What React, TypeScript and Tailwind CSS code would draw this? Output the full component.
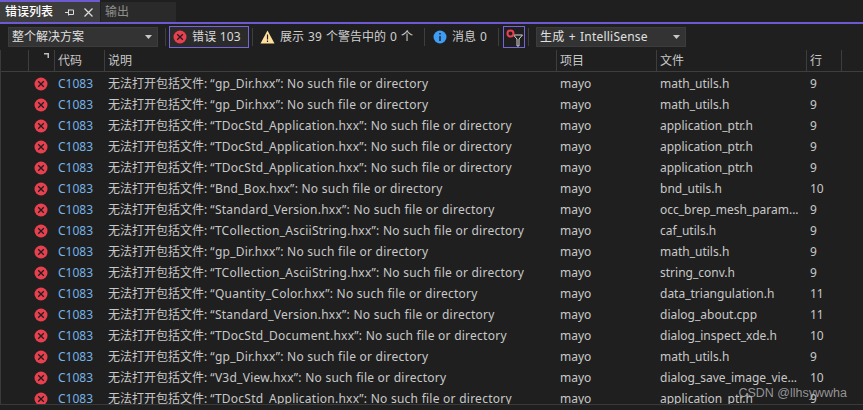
const rows = [
  ['gp_Dir.hxx', 'math_utils.h', '9'],
  ['gp_Dir.hxx', 'math_utils.h', '9'],
  ['TDocStd_Application.hxx', 'application_ptr.h', '9'],
  ['TDocStd_Application.hxx', 'application_ptr.h', '9'],
  ['TDocStd_Application.hxx', 'application_ptr.h', '9'],
  ['Bnd_Box.hxx', 'bnd_utils.h', '10'],
  ['Standard_Version.hxx', 'occ_brep_mesh_param...', '9'],
  ['TCollection_AsciiString.hxx', 'caf_utils.h', '9'],
  ['gp_Dir.hxx', 'math_utils.h', '9'],
  ['TCollection_AsciiString.hxx', 'string_conv.h', '9'],
  ['Quantity_Color.hxx', 'data_triangulation.h', '11'],
  ['Standard_Version.hxx', 'dialog_about.cpp', '11'],
  ['TDocStd_Document.hxx', 'dialog_inspect_xde.h', '10'],
  ['gp_Dir.hxx', 'math_utils.h', '9'],
  ['V3d_View.hxx', 'dialog_save_image_vie...', '10'],
  ['TDocStd_Application.hxx', 'application_ptr.h', '9'],
]

function ErrorIcon({ size = 14 }: { size?: number }) {
  return (
    <svg width={size} height={size} viewBox="0 0 14 14">
      <circle cx="7" cy="7" r="6.5" fill="#e8404f" />
      <path d="M4.2 4.2 9.8 9.8M9.8 4.2 4.2 9.8" stroke="#1e1e1e" strokeWidth="1.3" />
    </svg>
  )
}

function Caret() {
  return (
    <svg width="7" height="4" viewBox="0 0 7 4">
      <path d="M0 0h7L3.5 4z" fill="#c8c8c8" />
    </svg>
  )
}

function Sep() {
  return <div className="w-px h-[18px] bg-[#3e3e3e]" />
}

function HeaderCell({ label, className }: { label: string; className?: string }) {
  return <div className={`h-[21px] border-l border-[#3e3e3e] pl-[3px] leading-[21px] ${className ?? ''}`}>{label}</div>
}

export default function App() {
  return (
    <div className="relative w-[863px] h-[410px] overflow-hidden bg-[#1f1f1f] text-[12px] text-[#dadada] font-['Noto_Sans','Noto_Sans_CJK_SC',sans-serif]">
      {/* Tabs */}
      <div className="flex h-[22px] items-stretch">
        <div className="flex w-[100px] items-center border-t-2 border-[#6d5ad0] bg-[#3d3d3d] pl-[5px]">
          <span className="font-medium leading-none text-white">错误列表</span>
          <svg className="ml-[12px]" width="9" height="9" viewBox="0 0 9 9">
            <path d="M0 4.5h3M3.5 1.5v6M3.5 2h5v4.5h-5" fill="none" stroke="#dcdcdc" />
          </svg>
          <svg className="ml-[10px]" width="9" height="9" viewBox="0 0 9 9">
            <path d="M0.5 0.5 8.5 8.5M8.5 0.5 0.5 8.5" stroke="#dcdcdc" strokeWidth="1.2" />
          </svg>
        </div>
        <div className="ml-px mt-[2px] flex w-[75px] items-center bg-[#2a2a2a] pl-[4px] leading-none text-[#8f8f8f]">输出</div>
      </div>
      <div className="h-[2px] bg-[#6d5ad0]" />

      {/* Toolbar */}
      <div className="flex h-[26px] items-center pl-[8px]">
        <div className="flex h-[20px] w-[150px] items-center justify-between border border-[#3c3c3c] bg-[#333333] pl-[3px] pr-[5px] text-[#e0e0e0]">
          <span>整个解决方案</span>
          <Caret />
        </div>
        <div className="ml-[7px]"><Sep /></div>
        <div className="ml-[3px] flex h-[22px] w-[80px] items-center border border-[#7565d8] bg-[#2b2b2b] pl-[3px]">
          <ErrorIcon />
          <span className="ml-[5px] tracking-[0.2px]">错误 103</span>
        </div>
        <div className="ml-[3px]"><Sep /></div>
        <svg className="ml-[7px]" width="15" height="14" viewBox="0 0 15 14">
          <path d="M7.5 0.5 14.5 13.5H0.5z" fill="#ffdf9c" />
          <path d="M7.5 4.5v5M7.5 10.5v1.5" stroke="#1e1e1e" strokeWidth="1.2" />
        </svg>
        <span className="ml-[5px] w-[134px] text-[#cfcfcf] [word-spacing:1px]">展示 39 个警告中的 0 个</span>
        <div className="ml-[10px]"><Sep /></div>
        <svg className="ml-[8px]" width="14" height="14" viewBox="0 0 14 14">
          <circle cx="7" cy="7" r="6.5" fill="#3f9cf5" />
          <path d="M7 3v1.5M7 6v5" stroke="#1e1e1e" strokeWidth="1.4" />
        </svg>
        <span className="ml-[5px] w-[35px] text-[#cfcfcf] [word-spacing:1px]">消息 0</span>
        <div className="ml-[11px]"><Sep /></div>
        <div className="ml-[4px] flex h-[22px] w-[22px] items-center justify-center border border-[#7565d8]">
          <svg width="20" height="20" viewBox="0 0 20 20">
            <path d="M9.5 8h9l-3.5 4v7h-2v-7z" fill="none" stroke="#d8d8d8" />
            <circle cx="6.5" cy="6.5" r="3" fill="#1f1f1f" stroke="#e8404f" strokeWidth="2" />
          </svg>
        </div>
        <div className="ml-[3px]"><Sep /></div>
        <div className="ml-[7px] flex h-[20px] w-[150px] items-center justify-between border border-[#3c3c3c] bg-[#333333] pl-[3px] pr-[5px] text-[#e0e0e0]">
          <span className="[word-spacing:1px] tracking-[0.2px]">生成 + IntelliSense</span>
          <Caret />
        </div>
      </div>

      {/* Table */}
      <div className="border-l border-[#3a3a3a]">
        <div className="grid h-[22px] grid-cols-[27px_26px_50px_452px_100px_150px_35px_1fr] border-b border-[#3e3e3e] text-[#c8c8c8]">
          <div />
          <div className="relative h-[21px] border-l border-[#3e3e3e]">
            <svg className="absolute right-[5px] top-[3px]" width="5" height="5" viewBox="0 0 5 5">
              <path d="M0 0h5v5h-1.5V1.5H0z" fill="#bdbdbd" />
            </svg>
          </div>
          <HeaderCell label="代码" />
          <HeaderCell label="说明" />
          <HeaderCell label="项目" />
          <HeaderCell label="文件" />
          <HeaderCell label="行" />
          <div className="h-[21px] border-l border-[#3e3e3e]" />
        </div>
        <div className="h-[333px] overflow-hidden border-b border-[#3a3a3a] pt-px">
          {rows.map((r, i) => (
            <div key={i} className="grid h-[21px] grid-cols-[27px_26px_50px_452px_100px_150px_35px_1fr] items-center whitespace-nowrap">
              <div />
              <div className="flex items-center justify-center"><ErrorIcon /></div>
              <div className="pl-[4px] text-[#75b3e8]">C1083</div>
              <div className="pl-[4px] text-[#c8c8c8]">
                无法打开包括文件: <span className="tracking-[0.25px]">“{r[0]}”: No such file or directory</span>
              </div>
              <div className="pl-[4px] text-[#c8c8c8]">mayo</div>
              <div className="pl-[4px] text-[#c8c8c8]">{r[1]}</div>
              <div className="pl-[4px] text-[#c8c8c8]">{r[2]}</div>
            </div>
          ))}
        </div>
      </div>

      {/* Watermark */}
      <div className="absolute bottom-[7px] right-[16px] text-[12.5px] text-[#b4b4b4]/80 font-['Liberation_Sans',sans-serif]">CSDN @llhsywwha</div>
    </div>
  )
}
